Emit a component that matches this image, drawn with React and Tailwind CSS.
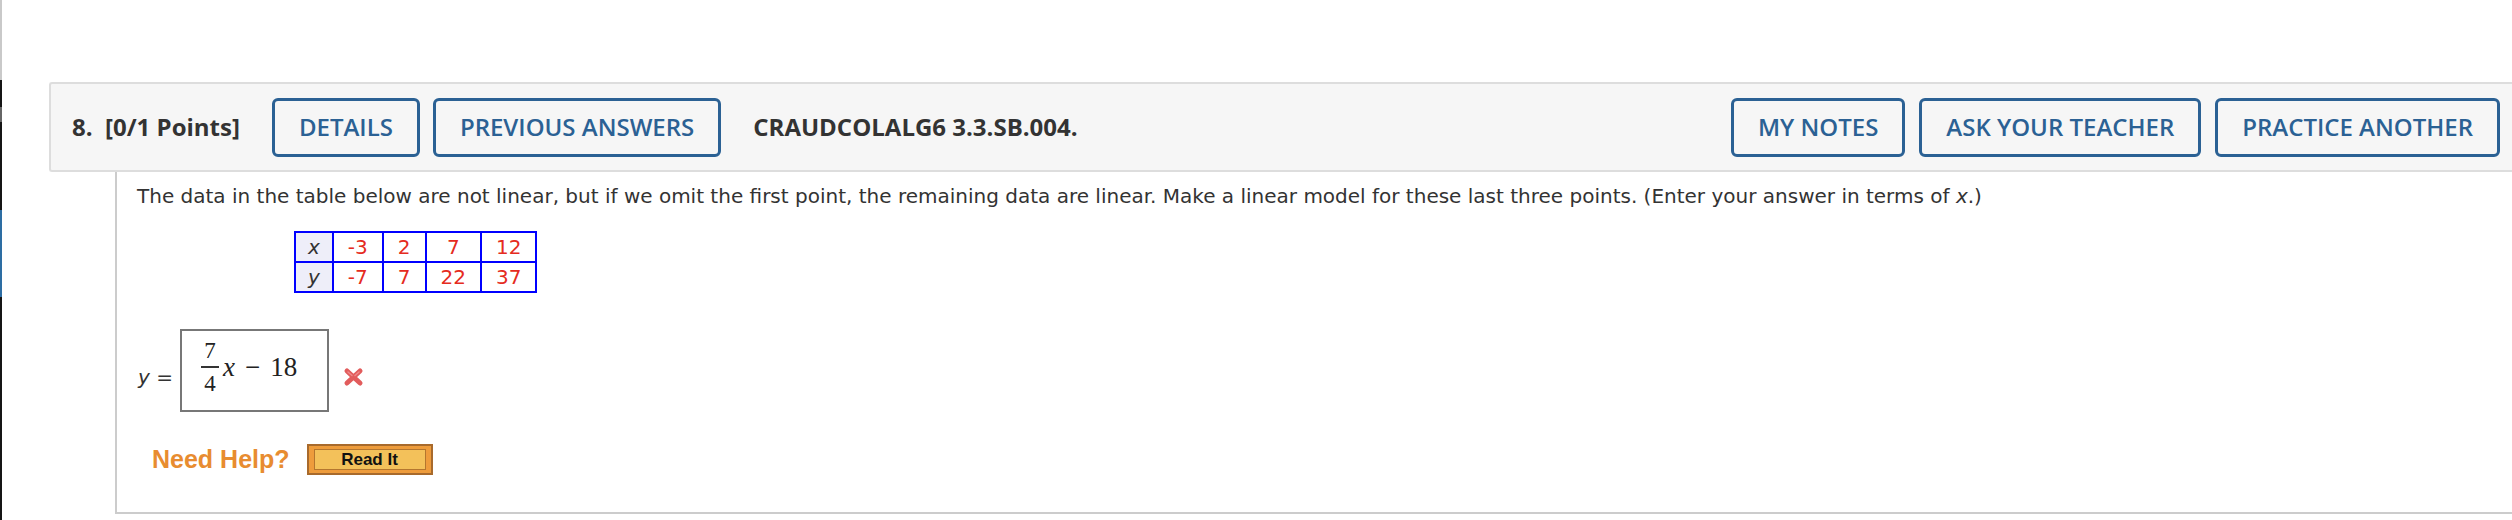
const cells = [
  { label: "x", values: ["-3", "2", "7", "12"] },
  { label: "y", values: ["-7", "7", "22", "37"] },
];

const HeaderButton = ({ children }) => (
  <button className="h-[59px] px-[24px] border-[3px] border-[#2b6194] rounded-[6px] text-[24px] font-semibold text-[#2b6194] whitespace-nowrap leading-none">
    {children}
  </button>
);

const WrongMark = () => (
  <svg width="21" height="20" viewBox="0 0 21 20">
    <path
      d="M4 4 L17 16 M17 4 L4 16"
      stroke="#e25c5c"
      strokeWidth="5"
      strokeLinecap="round"
      fill="none"
    />
    <path
      d="M5 5 L9 8.5 M16 5 L12 8.5"
      stroke="#ef8a8a"
      strokeWidth="1.5"
      strokeLinecap="round"
      fill="none"
    />
  </svg>
);

export default function App() {
  return (
    <div className="flex w-full h-[520px] bg-white overflow-hidden">
      {/* window edge */}
      <div className="w-[2px] flex flex-col shrink-0">
        <div className="h-[80px] bg-[#c9c9c9]" />
        <div className="h-[27px] bg-[#151515]" />
        <div className="h-[15px] bg-[#666]" />
        <div className="h-[88px] bg-[#151515]" />
        <div className="h-[87px] bg-[#2d6da3]" />
        <div className="flex-1 bg-[#151515]" />
      </div>

      <div className="flex-1 min-w-0 pt-[82px] pl-[47px] font-['Open_Sans',sans-serif]">
        {/* question header */}
        <div className="h-[90px] flex items-center bg-[#f6f6f6] border-2 border-r-0 border-[#dddddd] rounded-l-[3px] pl-[21px] pr-[12px]">
          <span className="text-[24px] font-bold text-[#333] whitespace-pre">8.  [0/1 Points]</span>
          <div className="ml-[32px] flex gap-[13px]">
            <HeaderButton>DETAILS</HeaderButton>
            <HeaderButton>PREVIOUS ANSWERS</HeaderButton>
          </div>
          <span className="ml-[32px] text-[24px] font-bold text-[#333] whitespace-nowrap">CRAUDCOLALG6 3.3.SB.004.</span>
          <div className="ml-auto flex gap-[14px]">
            <HeaderButton>MY NOTES</HeaderButton>
            <HeaderButton>ASK YOUR TEACHER</HeaderButton>
            <HeaderButton>PRACTICE ANOTHER</HeaderButton>
          </div>
        </div>

        {/* question body */}
        <div className="ml-[66px] h-[342px] border-l-2 border-b-2 border-[#cccccc] pl-[20px] pt-[12px] font-['DejaVu_Sans',sans-serif] text-[#333]">
          <p className="text-[20px] leading-[24px] whitespace-nowrap">
            The data in the table below are not linear, but if we omit the first point, the remaining data are linear. Make a linear model for these last three points. (Enter your answer in terms of <i>x</i>.)
          </p>

          <table className="mt-[23px] ml-[157px] border-collapse text-[20px] leading-[24px]">
            <tbody>
              {cells.map((row) => (
                <tr key={row.label}>
                  <td className="border-2 border-[#0000ff] bg-[#eeeef9] px-[12px] py-[2px] text-center italic text-[#333]">
                    {row.label}
                  </td>
                  {row.values.map((v, i) => (
                    <td
                      key={i}
                      className="border-2 border-[#0000ff] px-[14px] py-[2px] text-center text-[#e52b20]"
                    >
                      {v}
                    </td>
                  ))}
                </tr>
              ))}
            </tbody>
          </table>

          <div className="mt-[36px] ml-[1px] flex items-center">
            <span className="mt-[12px] text-[20px] leading-[24px] whitespace-pre">
              <i>y</i> =
            </span>
            <div className="ml-[7px] w-[149px] h-[83px] border-2 border-[#777] flex items-center pl-[19px] pb-[6px] font-['Liberation_Serif',serif] text-[#222]">
              <div className="flex flex-col items-center text-[23px] leading-[22px]">
                <span className="pb-[4px]">7</span>
                <span className="w-[18px] h-[2px] bg-[#333]" />
                <span className="pt-[5px]">4</span>
              </div>
              <span className="ml-[4px] text-[27px] leading-[27px] italic">x</span>
              <span className="mx-[10px] text-[27px] leading-[27px]">−</span>
              <span className="text-[27px] leading-[27px]">18</span>
            </div>
            <div className="ml-[14px] mt-[12px]">
              <WrongMark />
            </div>
          </div>

          <div className="mt-[32px] ml-[15px] flex items-center font-['Liberation_Sans',Arial,sans-serif]">
            <span className="text-[25px] font-bold text-[#e88c30] leading-none">Need Help?</span>
            <div className="ml-[17px] border-2 border-[#a86a2c] bg-[#ee9c3c] px-[5px] py-[3px]">
              <div className="w-[112px] h-[21px] border border-[#b4762e] bg-[#f3c15a] flex items-center justify-center text-[17px] font-bold text-[#111] leading-none">
                Read It
              </div>
            </div>
          </div>
        </div>
      </div>
    </div>
  );
}
